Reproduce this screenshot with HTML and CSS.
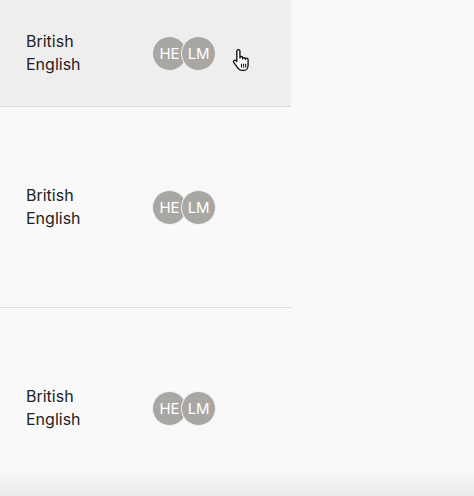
FILE: index.html
```html
<!DOCTYPE html>
<html lang="en">
<head>
<meta charset="utf-8">
<title>Languages</title>
<link rel="stylesheet" href="styles.css">
</head>
<body>
<div class="table">
  <div class="row row-hover row-short">
    <div class="cell-lang">British English</div>
    <div class="avatars">
      <span class="avatar">HE</span>
      <span class="avatar">LM</span>
    </div>
    <svg class="cursor" width="21" height="25" viewBox="0 0 20 24">
      <path d="M5.5 11 V3 a1.5 1.5 0 0 1 3 0 V9.5 a1.3 1.3 0 0 1 2.6 0 V10.5 a1.3 1.3 0 0 1 2.6 0 V11 a1.3 1.3 0 0 1 2.6 0 V16.5 c0 2.8 -1.6 5 -3.8 5 H9.8 c-1.6 0 -2.6 -1 -3.6 -2.6 L2.4 13.6 a1.3 1.3 0 0 1 2 -1.6 L5.5 13 Z" fill="#fff" stroke="#111" stroke-width="1.3" stroke-linejoin="round"/>
      <path d="M10 15 v3.6 M12 15 v3.6 M14 15 v3.6" stroke="#111" stroke-width="1"/>
    </svg>
  </div>
  <div class="row">
    <div class="cell-lang">British English</div>
    <div class="avatars">
      <span class="avatar">HE</span>
      <span class="avatar">LM</span>
    </div>
  </div>
  <div class="row">
    <div class="cell-lang">British English</div>
    <div class="avatars">
      <span class="avatar">HE</span>
      <span class="avatar">LM</span>
    </div>
  </div>
</div>
<div class="fade"></div>
</body>
</html>
```
FILE: styles.css
```css
html, body {
  margin: 0;
  padding: 0;
  background: #f9f9f9;
  height: 100%;
  overflow: hidden;
}
body {
  font-family: Inter, "Noto Sans", sans-serif;
  color: #222222;
}
.table {
  width: 291px;
}
.row {
  position: relative;
  display: flex;
  align-items: center;
  height: 200px;
  border-bottom: 1px solid #dddddd;
}
.row-short {
  height: 106px;
}
.row-hover {
  background: #efeeee;
}
.cell-lang {
  box-sizing: border-box;
  width: 152px;
  padding: 0 40px 0 26px;
  font-size: 16px;
  line-height: 23px;
}
.avatars {
  display: flex;
  align-items: center;
}
.avatar {
  box-sizing: border-box;
  width: 35px;
  height: 35px;
  border-radius: 50%;
  background: #a9a7a4;
  border: 1.5px solid #f4f4f4;
  color: #fff;
  font-size: 15px;
  display: flex;
  align-items: center;
  justify-content: center;
  letter-spacing: -0.2px;
}
.avatar + .avatar {
  margin-left: -6px;
}
.cursor {
  position: absolute;
  left: 231px;
  top: 48px;
}
.fade {
  position: fixed;
  left: 0;
  right: 0;
  bottom: 0;
  height: 26px;
  background: linear-gradient(to bottom, rgba(236,236,236,0), rgba(234,234,234,1));
}
```
